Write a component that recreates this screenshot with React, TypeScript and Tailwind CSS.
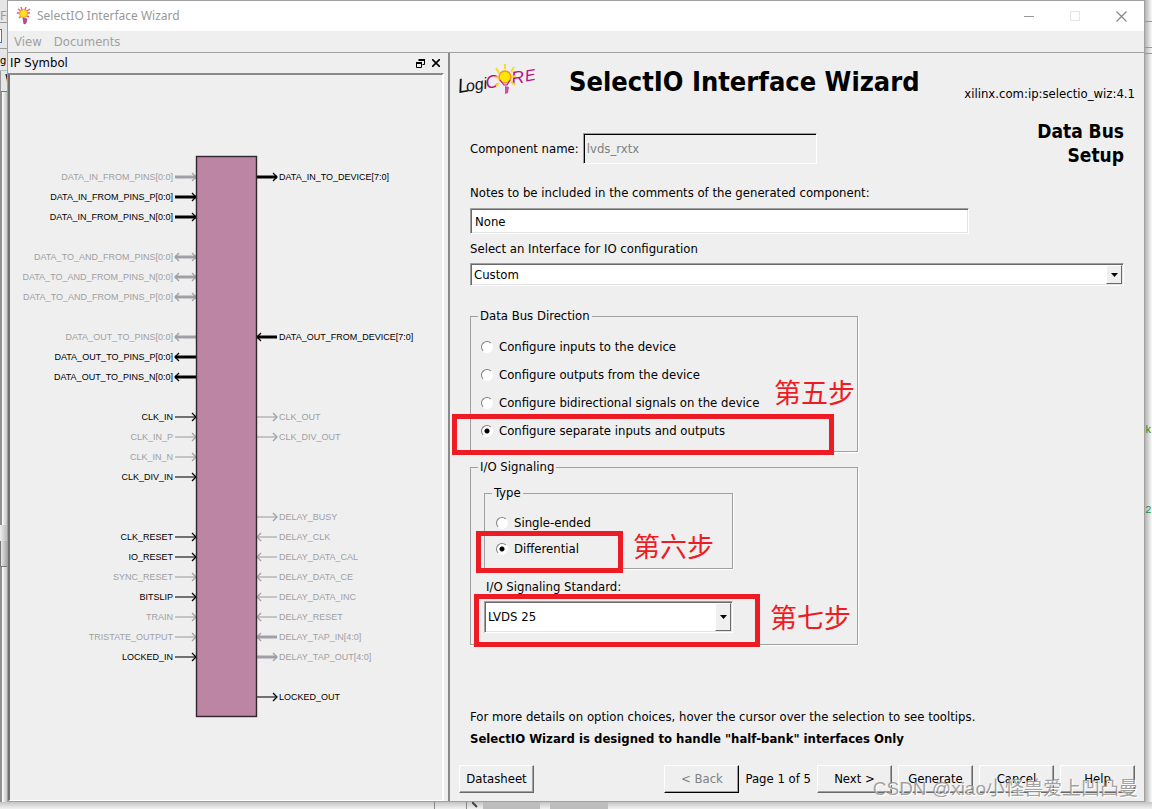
import type { ReactNode } from 'react'

import clsx from 'clsx'

type Direction = 'in' | 'out' | 'both'

type Pin = {
  name: string
  row: number
  dir: Direction
  bus?: boolean
  active?: boolean
}

const ROW_HEIGHT = 20
const FIRST_ROW = 102

const leftPins: Pin[] = [
  { name: 'DATA_IN_FROM_PINS[0:0]', row: 0, dir: 'in', bus: true },
  { name: 'DATA_IN_FROM_PINS_P[0:0]', row: 1, dir: 'in', bus: true, active: true },
  { name: 'DATA_IN_FROM_PINS_N[0:0]', row: 2, dir: 'in', bus: true, active: true },
  { name: 'DATA_TO_AND_FROM_PINS[0:0]', row: 4, dir: 'both', bus: true },
  { name: 'DATA_TO_AND_FROM_PINS_N[0:0]', row: 5, dir: 'both', bus: true },
  { name: 'DATA_TO_AND_FROM_PINS_P[0:0]', row: 6, dir: 'both', bus: true },
  { name: 'DATA_OUT_TO_PINS[0:0]', row: 8, dir: 'out', bus: true },
  { name: 'DATA_OUT_TO_PINS_P[0:0]', row: 9, dir: 'out', bus: true, active: true },
  { name: 'DATA_OUT_TO_PINS_N[0:0]', row: 10, dir: 'out', bus: true, active: true },
  { name: 'CLK_IN', row: 12, dir: 'in', active: true },
  { name: 'CLK_IN_P', row: 13, dir: 'in' },
  { name: 'CLK_IN_N', row: 14, dir: 'in' },
  { name: 'CLK_DIV_IN', row: 15, dir: 'in', active: true },
  { name: 'CLK_RESET', row: 18, dir: 'in', active: true },
  { name: 'IO_RESET', row: 19, dir: 'in', active: true },
  { name: 'SYNC_RESET', row: 20, dir: 'in' },
  { name: 'BITSLIP', row: 21, dir: 'in', active: true },
  { name: 'TRAIN', row: 22, dir: 'in' },
  { name: 'TRISTATE_OUTPUT', row: 23, dir: 'in' },
  { name: 'LOCKED_IN', row: 24, dir: 'in', active: true }
]

const rightPins: Pin[] = [
  { name: 'DATA_IN_TO_DEVICE[7:0]', row: 0, dir: 'out', bus: true, active: true },
  { name: 'DATA_OUT_FROM_DEVICE[7:0]', row: 8, dir: 'in', bus: true, active: true },
  { name: 'CLK_OUT', row: 12, dir: 'out' },
  { name: 'CLK_DIV_OUT', row: 13, dir: 'out' },
  { name: 'DELAY_BUSY', row: 17, dir: 'out' },
  { name: 'DELAY_CLK', row: 18, dir: 'in' },
  { name: 'DELAY_DATA_CAL', row: 19, dir: 'in' },
  { name: 'DELAY_DATA_CE', row: 20, dir: 'in' },
  { name: 'DELAY_DATA_INC', row: 21, dir: 'in' },
  { name: 'DELAY_RESET', row: 22, dir: 'in' },
  { name: 'DELAY_TAP_IN[4:0]', row: 23, dir: 'in', bus: true },
  { name: 'DELAY_TAP_OUT[4:0]', row: 24, dir: 'out', bus: true },
  { name: 'LOCKED_OUT', row: 26, dir: 'out', active: true }
]

const PinMark = ({ pin, side }: { pin: Pin; side: 'left' | 'right' }) => {
  const y = FIRST_ROW + pin.row * ROW_HEIGHT
  const x1 = side === 'left' ? 165 : 247
  const x2 = side === 'left' ? 186 : 267
  const pointsRight = pin.dir === 'both' || (side === 'left' ? pin.dir === 'in' : pin.dir === 'out')
  const pointsLeft = pin.dir === 'both' || !pointsRight
  const dark = pin.active ? '#000' : '#a0a0a4'
  const line = pin.bus ? dark : pin.active ? '#707070' : '#c4c4c4'

  return (
    <g>
      <text
        x={side === 'left' ? 163 : 269}
        y={y + 3}
        textAnchor={side === 'left' ? 'end' : 'start'}
        fill={dark}
        className="text-[9px]"
      >
        {pin.name}
      </text>
      <line x1={x1} x2={x2} y1={y} y2={y} stroke={line} strokeWidth={pin.bus ? 3 : 2} />
      {pointsRight && <path d={`M${x2 - 4} ${y - 4}l4 4l-4 4`} fill="none" stroke={dark} strokeWidth="1.3" />}
      {pointsLeft && <path d={`M${x1 + 4} ${y - 4}l-4 4l4 4`} fill="none" stroke={dark} strokeWidth="1.3" />}
    </g>
  )
}

const IpSymbol = () => (
  <svg width="433" height="660" className="shrink-0 font-['Liberation_Sans',sans-serif]">
    {leftPins.map((pin) => (
      <PinMark key={pin.name} pin={pin} side="left" />
    ))}
    {rightPins.map((pin) => (
      <PinMark key={pin.name} pin={pin} side="right" />
    ))}
    <rect x="186.500" y="81.500" width="60" height="560" fill="#bd85a4" stroke="#33242d" strokeWidth="1.400" />
  </svg>
)

const BulbIcon = () => (
  <svg width="14" height="18" viewBox="0 0 14 18">
    <g stroke="#e0559a" strokeWidth="1.4">
      <path d="M1 2l3 2M4 0l1 3M9 0l-1 3M13 2l-3 2M0 6h3M13 6h-3M2 11l2-2M12 10l-2-1" />
    </g>
    <circle cx="6.5" cy="6.5" r="4" fill="#ffe21f" stroke="#f19a28" />
    <path d="M6 11l4 1-1 4-2 1z" fill="#c44a97" stroke="#8f2f6d" strokeWidth=".7" />
  </svg>
)

const LogiCoreLogo = () => (
  <svg
    width="82"
    height="34"
    viewBox="0 0 82 34"
    className="shrink-0 overflow-visible font-['Liberation_Sans',sans-serif] italic"
    role="img"
    aria-label="LogiCORE"
  >
    <g transform="rotate(-9 0 30)">
      <text x="0" y="29" fill="#111" className="text-[20px]">
        L
      </text>
      <text x="8" y="29" fill="#111" className="text-[16px]">
        ogi
      </text>
      <text x="28" y="29" fill="#b8107f" className="text-[18px]">
        C
      </text>
      <text x="54" y="29" fill="#b8107f" className="text-[18px]">
        R
      </text>
      <text x="68" y="28" fill="#b8107f" className="text-[16px]">
        E
      </text>
    </g>
    <g stroke="#f5dc2a" strokeWidth="2">
      <path d="M46 0v5M37 4l3 5M55 3l-3 5M36 13l3 1M57 12l-4 1M37 22l3-3M56 21l-4-3" />
    </g>
    <circle cx="46" cy="13" r="6" fill="#ffe600" stroke="#f0962a" strokeWidth="1.6" />
    <path d="M41 16l4 5h3l3-5" fill="none" stroke="#c2188c" strokeWidth="1.2" />
    <path d="M46 22l4 1-1 6-3 1z" fill="#c2188c" opacity=".75" />
  </svg>
)

const TitleBar = () => (
  <header className="flex h-[30px] items-center bg-white pl-[9px]">
    <BulbIcon />
    <h1 className="ml-[6px] flex-1 font-['Noto_Sans',sans-serif] text-[12px] leading-4 text-[#999]">
      SelectIO Interface Wizard
    </h1>
    <button type="button" aria-label="Minimize" className="flex h-full w-[46px] items-center justify-center">
      <svg width="11" height="11">
        <path d="M0 5.5h10" stroke="#999" />
      </svg>
    </button>
    <button type="button" aria-label="Maximize" className="flex h-full w-[46px] items-center justify-center">
      <svg width="11" height="11">
        <path d="M.5 .5h9v9h-9z" fill="none" stroke="#e3e3e3" />
      </svg>
    </button>
    <button type="button" aria-label="Close" className="flex h-full w-[46px] items-center justify-center">
      <svg width="11" height="11">
        <path d="M.5 .5l10 10M10.5 .5l-10 10" stroke="#888" strokeWidth="1.2" />
      </svg>
    </button>
  </header>
)

const SymbolDock = () => (
  <section className="flex w-[442px] shrink-0 flex-col border-r-2 border-[#8a8a8a]">
    <div className="flex h-5 items-center pr-1 pl-[2px]">
      <h2 className="flex-1">IP Symbol</h2>
      <button type="button" aria-label="Float" className="flex h-4 w-4 items-center justify-center">
        <svg width="9" height="9">
          <path d="M3 1h5.500v4.500h-2" fill="none" stroke="#000" strokeWidth="1" />
          <path d="M2.500 1h6.500" stroke="#000" strokeWidth="2" />
          <path d="M.5 4.500h5v4h-5z" fill="none" stroke="#000" />
          <path d="M0 4h6" stroke="#000" strokeWidth="2" />
        </svg>
      </button>
      <button type="button" aria-label="Close panel" className="flex h-4 w-4 items-center justify-center">
        <svg width="8" height="8">
          <path d="M0 0l8 8M8 0l-8 8" stroke="#000" strokeWidth="1.600" />
        </svg>
      </button>
    </div>
    <div className="mr-1 flex flex-1 flex-col border-t-2 border-r-2 border-b border-l-2 border-t-[#8a8a8a] border-r-white border-b-white border-l-[#707070]">
      <IpSymbol />
    </div>
  </section>
)

const sunken =
  'border border-t-[#a0a0a0] border-l-[#a0a0a0] border-r-white border-b-white outline-none rounded-none shadow-[inset_1px_1px_0_#696969,inset_-1px_-1px_0_#e3e3e3]'

type DropDownProps = { id: string; value: string; className: string }

const DropDown = ({ id, value, className }: DropDownProps) => (
  <div className={clsx('relative', className)}>
    <select id={id} className={clsx('h-full w-full appearance-none bg-white pr-5 pl-[3px]', sunken)}>
      <option>{value}</option>
    </select>
    <span className="pointer-events-none absolute top-[2px] right-[2px] bottom-[2px] flex w-4 items-center justify-center border border-t-white border-r-[#696969] border-b-[#696969] border-l-white bg-[#efefef]">
      <svg width="7" height="4">
        <path d="M0 0h7l-3.500 4z" />
      </svg>
    </span>
  </div>
)

type RadioProps = { name: string; children: ReactNode; checked?: boolean; className: string }

const Radio = ({ name, children, checked, className }: RadioProps) => (
  <label className={clsx('flex items-center gap-[6px]', className)}>
    <input
      type="radio"
      name={name}
      defaultChecked={checked}
      className="h-3 w-3 appearance-none rounded-full border border-t-[#808080] border-r-white border-b-white border-l-[#808080] bg-white checked:bg-[radial-gradient(circle,#000_2px,#fff_3px)]"
    />
    {children}
  </label>
)

type PushButtonProps = { children: ReactNode; disabled?: boolean; className?: string }

const PushButton = ({ children, disabled, className }: PushButtonProps) => (
  <button
    type="button"
    disabled={disabled}
    className={clsx(
      'h-7 w-[75px] border border-t-white border-l-white whitespace-nowrap shadow-[inset_-1px_-1px_0_#a0a0a0]',
      disabled ? 'border-r-black border-b-black text-[#808080]' : 'border-r-[#696969] border-b-[#696969]',
      className
    )}
  >
    {children}
  </button>
)

// red marker box and the step note that goes with it
const Marker = ({ className }: { className: string }) => (
  <div className={clsx('pointer-events-none absolute border-[5px] border-[#ed1c24]', className)} />
)

const StepNote = ({ children, className }: { children: ReactNode; className: string }) => (
  <p
    className={clsx(
      "absolute font-['Noto_Sans_CJK_SC',sans-serif] text-[27px] leading-8 whitespace-nowrap text-[#ed1c24]",
      className
    )}
  >
    {children}
  </p>
)

const groupBox = 'border border-[#a0a0a0] pl-[7px] shadow-[1px_1px_0_#fff]'

const WizardPage = () => (
  <main className="relative flex min-w-0 flex-1 flex-col pt-[11px] pb-2">
    <div className="flex h-[38px] items-start px-[9px]">
      <LogiCoreLogo />
      <h2 className="ml-7 text-[27px] leading-9 font-bold whitespace-nowrap">SelectIO Interface Wizard</h2>
      <span className="ml-auto self-end">xilinx.com:ip:selectio_wiz:4.1</span>
    </div>

    <form className="flex flex-col px-5 pt-[17px]">
      <div className="flex items-end justify-between">
        <div className="flex items-center pb-[3px]">
          <label htmlFor="component">Component name:</label>
          <input
            id="component"
            disabled
            defaultValue="lvds_rxtx"
            className="ml-1 h-[31px] w-[234px] border border-t-[#a0a0a0] border-r-white border-b-white border-l-[#a0a0a0] pl-[3px] text-[#808080] shadow-[inset_1px_1px_0_#000]"
          />
        </div>
        <h3 className="w-24 text-right text-[19px] leading-6 font-bold">Data Bus Setup</h3>
      </div>

      <label htmlFor="notes" className="mt-[18px]">
        Notes to be included in the comments of the generated component:
      </label>
      <input id="notes" defaultValue="None" className={clsx('mt-[7px] h-[26px] w-[499px] bg-white pl-1', sunken)} />

      <label htmlFor="interface" className="mt-[7px]">
        Select an Interface for IO configuration
      </label>
      <DropDown id="interface" value="Custom" className="mt-[6px] h-[23px]" />

      <div className="relative mt-[22px] w-[388px]">
        <fieldset className={clsx('pt-[9px] pb-[6px]', groupBox)}>
          <legend className="px-[2px]">Data Bus Direction</legend>
          <Radio name="direction" className="ml-[3px] h-7">
            Configure inputs to the device
          </Radio>
          <Radio name="direction" className="ml-[3px] h-7">
            Configure outputs from the device
          </Radio>
          <Radio name="direction" className="ml-[3px] h-7">
            Configure bidirectional signals on the device
          </Radio>
          <Radio name="direction" className="ml-[3px] h-7" checked>
            Configure separate inputs and outputs
          </Radio>
        </fieldset>
        <StepNote className="top-[68px] left-[304px]">第五步</StepNote>
        <Marker className="top-[106px] left-[-18px] z-10 h-[41px] w-[382px]" />
      </div>

      <div className="relative mt-[7px] w-[388px]">
        <fieldset className={clsx('pt-[10px] pb-[11px]', groupBox)}>
          <legend className="px-[2px]">I/O Signaling</legend>
          <fieldset className={clsx('ml-[6px] w-[249px] pt-[9px] pb-[6px]', groupBox)}>
            <legend className="px-[2px]">Type</legend>
            <Radio name="type" className="ml-1 h-[26px]">
              Single-ended
            </Radio>
            <Radio name="type" className="ml-1 h-[26px]" checked>
              Differential
            </Radio>
          </fieldset>
          <label htmlFor="standard" className="mt-[10px] ml-2 block">
            I/O Signaling Standard:
          </label>
          <DropDown id="standard" value="LVDS 25" className="mt-[6px] ml-[6px] h-8 w-[249px]" />
        </fieldset>
        <Marker className="top-[72px] left-[6px] h-[42px] w-[147px]" />
        <StepNote className="top-[71px] left-[163px]">第六步</StepNote>
        <Marker className="top-[135px] left-1 h-[53px] w-[286px]" />
        <StepNote className="top-[142px] left-[300px]">第七步</StepNote>
      </div>
    </form>

    <div className="mt-auto px-5">
      <p>For more details on option choices, hover the cursor over the selection to see tooltips.</p>
      <p className="mt-[6px] font-bold">SelectIO Wizard is designed to handle "half-bank" interfaces Only</p>
    </div>

    <footer className="mt-[18px] flex items-center gap-[6px] px-[9px]">
      <PushButton className="mr-auto">Datasheet</PushButton>
      <PushButton disabled>&lt; Back</PushButton>
      <span className="whitespace-nowrap">Page 1 of 5</span>
      <PushButton>Next &gt;</PushButton>
      <PushButton>Generate</PushButton>
      <PushButton>Cancel</PushButton>
      <PushButton>Help</PushButton>
    </footer>

    <p className="pointer-events-none absolute right-[6px] -bottom-1 font-['Liberation_Sans','Noto_Sans_CJK_SC',sans-serif] text-[19px] leading-8 whitespace-nowrap text-[#8c8c8c]/80 [text-shadow:1px_1px_0_#fff]">
      CSDN @xiao小怪兽爱上凹凸曼
    </p>
  </main>
)

// slivers of the editor window that stay visible around the dialog
const LeftEdge = () => (
  <div className="flex w-[7px] shrink-0 flex-col overflow-hidden bg-[#e6e6e6] whitespace-nowrap">
    <div className="h-[23px] border-b border-[#999] pt-2 text-[#999]">Fi</div>
    <div className="h-[26px] border-b border-[#999] pt-[6px]">
      <div className="h-[14px] w-[2px] border-y border-r border-[#3f75c4] bg-white" />
    </div>
    <div className="h-[22px] border-b border-[#bbb] pt-1 text-[11px]">g</div>
    <div className="h-[20px] border-l border-[#999] pl-1">W</div>
    <div className="h-[434px] border-t border-l-2 border-t-[#777] border-l-[#909090] bg-linear-to-r from-white to-[#c4c4c4]" />
    <div className="h-[16px] bg-linear-to-r from-[#eee] to-[#bbb]" />
    <div className="h-[26px] border-b border-l border-[#777] bg-linear-to-r from-[#e6e6e6] to-[#aaa]" />
    <div className="flex-1 border-l-2 border-[#909090] bg-linear-to-r from-white to-[#c4c4c4]" />
  </div>
)

const RightEdge = () => (
  <div className="flex w-[7px] shrink-0 flex-col overflow-hidden bg-linear-to-r from-[#b4b4b4] to-[#fafafa] font-['Liberation_Mono',monospace] text-[11px] text-[#2e8b2e]">
    <div className="h-[22px] border-b border-[#999]" />
    <div className="h-[26px] border-b border-[#999]" />
    <div className="h-[6px] border-b border-[#999]" />
    <span className="mt-[368px]">k</span>
    <span className="mt-16">2</span>
  </div>
)

const BottomEdge = () => (
  <div className="flex h-[7px] shrink-0 bg-linear-to-b from-[#c4c4c4] to-[#f2f2f2]">
    <div className="w-[435px] border-r border-[#888]" />
    <div className="w-8 border-r border-[#888]" />
    <div className="flex w-4 justify-center">
      <svg width="7" height="7">
        <path d="M0 0l5 5" stroke="#444" strokeWidth="2" />
      </svg>
    </div>
    <div className="w-[57px] bg-[#bdbdbd]" />
    <div className="w-[10px]" />
    <div className="w-[58px] bg-[#bdbdbd]" />
  </div>
)

const App = () => (
  <div className="flex min-h-screen flex-col bg-[#f0f0f0] font-['DejaVu_Sans_Condensed','DejaVu_Sans',sans-serif] text-[13px] leading-4 text-black">
    <div className="flex flex-1">
      <LeftEdge />
      <div className="flex min-w-0 flex-1 flex-col border border-[#a0a0a0] bg-[#efefef]">
        <TitleBar />
        <nav className="flex h-[22px] items-center gap-3 border-b border-[#a0a0a0] pl-[6px] text-[#a0a0a0]">
          <button type="button">View</button>
          <button type="button">Documents</button>
        </nav>
        <div className="flex flex-1">
          <SymbolDock />
          <WizardPage />
        </div>
      </div>
      <RightEdge />
    </div>
    <BottomEdge />
  </div>
)

export default App
